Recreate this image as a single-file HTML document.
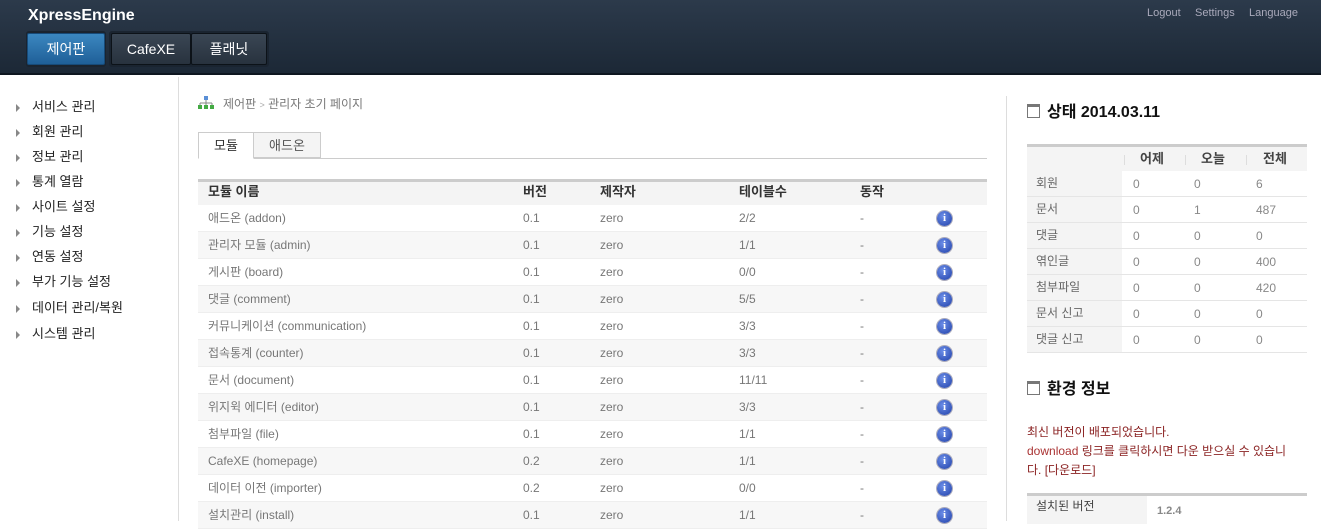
<!DOCTYPE html>
<html><head><meta charset="utf-8"><style>
*{margin:0;padding:0;box-sizing:border-box}
body{width:1321px;height:521px;overflow:hidden;font-family:"Liberation Sans","Noto Sans CJK KR",sans-serif;font-size:12px;line-height:1.15;color:#333;background:#fff;position:relative}
.hd{position:absolute;left:0;top:0;width:1321px;height:75px;background:linear-gradient(#2c3a4b,#1c2836);border-bottom:2px solid #0e1620}
.logo{position:absolute;left:28px;top:7px;color:#fff;font-weight:bold;font-size:16px}
.gnb{position:absolute;top:31px;height:36px;background:#1a2430;border-radius:3px}
.btn{position:absolute;top:2px;height:32px;line-height:30px;color:#fff;font-size:14px;text-align:center;border:1px solid #0c1218;border-radius:2px;background:linear-gradient(#3a4654,#28323e)}
.top{position:absolute;top:7px;color:#aab;font-size:11px}
.lnb{position:absolute;left:0;top:77px;width:179px;height:444px;border-right:1px solid #ddd}
.lnb div{position:absolute;left:32px;font-size:13px;color:#222}
.lnb div:before{content:"";position:absolute;left:-16px;top:4px;border-left:4px solid #888;border-top:4px solid transparent;border-bottom:4px solid transparent}
.abs{position:absolute}
.row{position:absolute;left:198px;width:789px;height:27px;border-bottom:1px solid #eee;color:#777;font-size:12px}
.row span{position:absolute;top:6px;line-height:14px}
.row.o{background:#f7f7f7}
.ic{position:absolute;left:739px;top:6px;width:15px;height:15px;border-radius:50%;background:radial-gradient(circle at 40% 35%,#6c8ee8,#1f3fa8);color:#fff;font:bold 11px "Liberation Serif",serif;text-align:center;line-height:15px;box-shadow:0 0 0 1px #aab}
.rs{position:absolute;left:1006px;top:96px;width:1px;height:425px;background:#ddd}
.t2{position:absolute;left:1027px;width:280px;height:26px;border-bottom:1px solid #e5e5e5;color:#888}
.t2 .l{position:absolute;left:0;top:0;width:95px;height:25px;background:#f4f4f4;padding:5px 0 0 9px;color:#666;line-height:14px}
.t2 span{position:absolute;top:6px;line-height:14px}
.h3{position:absolute;left:1027px;font-size:16px;font-weight:bold;color:#111}
.h3:before{content:"";display:inline-block;width:11px;height:10px;border:1px solid #777;border-top:3px solid #777;margin-right:7px;vertical-align:-1px}
</style></head><body>
<div class="hd">
<div class="logo">XpressEngine</div>
<div class="gnb" style="left:26px;width:80px"><div class="btn" style="left:1px;width:78px;background:linear-gradient(#3b87c0,#1f5f98);border-color:#174a78">제어판</div></div>
<div class="gnb" style="left:109px;width:160px"><div class="btn" style="left:2px;width:80px">CafeXE</div><div class="btn" style="left:82px;width:76px">플래닛</div></div>
<div class="top" style="left:1147px">Logout</div><div class="top" style="left:1195px">Settings</div><div class="top" style="left:1249px">Language</div>
</div>
<div class="lnb">
<div style="top:23px">서비스 관리</div><div style="top:48px">회원 관리</div><div style="top:73px">정보 관리</div><div style="top:98px">통계 열람</div><div style="top:123px">사이트 설정</div><div style="top:148px">기능 설정</div><div style="top:173px">연동 설정</div><div style="top:198px">부가 기능 설정</div><div style="top:224px">데이터 관리/복원</div><div style="top:250px">시스템 관리</div>
</div>
<svg class="abs" style="left:198px;top:96px" width="16" height="13"><rect x="6" y="0" width="4" height="4" fill="#5a8fd6"/><path d="M8 4v3M2 7h12M2 7v2M8 7v2M14 7v2" stroke="#888" fill="none"/><rect x="0" y="9" width="4" height="4" fill="#4a4"/><rect x="6" y="9" width="4" height="4" fill="#4a4"/><rect x="12" y="9" width="4" height="4" fill="#4a4"/></svg>
<div class="abs" style="left:223px;top:98px;color:#777;font-size:12px">제어판 <span style="font-size:9px;color:#aaa">&gt;</span> 관리자 초기 페이지</div>
<div class="abs" style="left:198px;top:158px;width:789px;height:1px;background:#ccc"></div>
<div class="abs" style="left:198px;top:132px;width:56px;height:27px;border:1px solid #ccc;border-bottom:1px solid #fff;background:#fff;text-align:center;line-height:25px;font-size:13px;color:#333">모듈</div>
<div class="abs" style="left:253px;top:132px;width:68px;height:26px;border:1px solid #ccc;background:#f4f4f4;text-align:center;line-height:25px;font-size:13px;color:#555">애드온</div>
<div class="abs" style="left:198px;top:179px;width:789px;height:26px;background:#f4f4f4;border-top:3px solid #ccc;font-weight:bold;color:#333;font-size:13px;line-height:15px">
<span class="abs" style="left:10px;top:2px">모듈 이름</span><span class="abs" style="left:325px;top:2px">버전</span><span class="abs" style="left:402px;top:2px">제작자</span><span class="abs" style="left:541px;top:2px">테이블수</span><span class="abs" style="left:662px;top:2px">동작</span></div>
<div class="row" style="top:205px"><span style="left:10px">애드온 (addon)</span><span style="left:325px">0.1</span><span style="left:402px">zero</span><span style="left:541px">2/2</span><span style="left:662px">-</span><i class="ic">i</i></div>
<div class="row o" style="top:232px"><span style="left:10px">관리자 모듈 (admin)</span><span style="left:325px">0.1</span><span style="left:402px">zero</span><span style="left:541px">1/1</span><span style="left:662px">-</span><i class="ic">i</i></div>
<div class="row" style="top:259px"><span style="left:10px">게시판 (board)</span><span style="left:325px">0.1</span><span style="left:402px">zero</span><span style="left:541px">0/0</span><span style="left:662px">-</span><i class="ic">i</i></div>
<div class="row o" style="top:286px"><span style="left:10px">댓글 (comment)</span><span style="left:325px">0.1</span><span style="left:402px">zero</span><span style="left:541px">5/5</span><span style="left:662px">-</span><i class="ic">i</i></div>
<div class="row" style="top:313px"><span style="left:10px">커뮤니케이션 (communication)</span><span style="left:325px">0.1</span><span style="left:402px">zero</span><span style="left:541px">3/3</span><span style="left:662px">-</span><i class="ic">i</i></div>
<div class="row o" style="top:340px"><span style="left:10px">접속통계 (counter)</span><span style="left:325px">0.1</span><span style="left:402px">zero</span><span style="left:541px">3/3</span><span style="left:662px">-</span><i class="ic">i</i></div>
<div class="row" style="top:367px"><span style="left:10px">문서 (document)</span><span style="left:325px">0.1</span><span style="left:402px">zero</span><span style="left:541px">11/11</span><span style="left:662px">-</span><i class="ic">i</i></div>
<div class="row o" style="top:394px"><span style="left:10px">위지윅 에디터 (editor)</span><span style="left:325px">0.1</span><span style="left:402px">zero</span><span style="left:541px">3/3</span><span style="left:662px">-</span><i class="ic">i</i></div>
<div class="row" style="top:421px"><span style="left:10px">첨부파일 (file)</span><span style="left:325px">0.1</span><span style="left:402px">zero</span><span style="left:541px">1/1</span><span style="left:662px">-</span><i class="ic">i</i></div>
<div class="row o" style="top:448px"><span style="left:10px">CafeXE (homepage)</span><span style="left:325px">0.2</span><span style="left:402px">zero</span><span style="left:541px">1/1</span><span style="left:662px">-</span><i class="ic">i</i></div>
<div class="row" style="top:475px"><span style="left:10px">데이터 이전 (importer)</span><span style="left:325px">0.2</span><span style="left:402px">zero</span><span style="left:541px">0/0</span><span style="left:662px">-</span><i class="ic">i</i></div>
<div class="row o" style="top:502px"><span style="left:10px">설치관리 (install)</span><span style="left:325px">0.1</span><span style="left:402px">zero</span><span style="left:541px">1/1</span><span style="left:662px">-</span><i class="ic">i</i></div>
<div class="rs"></div>
<div class="h3" style="top:104px">상태 2014.03.11</div>
<div class="abs" style="left:1027px;top:144px;width:280px;height:27px;background:#f4f4f4;border-top:3px solid #ccc;font-weight:bold;font-size:13px;color:#444;line-height:15px">
<span class="abs" style="left:113px;top:4px">어제</span><span class="abs" style="left:174px;top:4px">오늘</span><span class="abs" style="left:236px;top:4px">전체</span>
<i class="abs" style="left:97px;top:8px;width:1px;height:10px;background:#ddd"></i><i class="abs" style="left:158px;top:8px;width:1px;height:10px;background:#ddd"></i><i class="abs" style="left:219px;top:8px;width:1px;height:10px;background:#ddd"></i></div>
<div class="t2" style="top:171px"><div class="l">회원</div><span style="left:106px">0</span><span style="left:167px">0</span><span style="left:229px">6</span></div>
<div class="t2" style="top:197px"><div class="l">문서</div><span style="left:106px">0</span><span style="left:167px">1</span><span style="left:229px">487</span></div>
<div class="t2" style="top:223px"><div class="l">댓글</div><span style="left:106px">0</span><span style="left:167px">0</span><span style="left:229px">0</span></div>
<div class="t2" style="top:249px"><div class="l">엮인글</div><span style="left:106px">0</span><span style="left:167px">0</span><span style="left:229px">400</span></div>
<div class="t2" style="top:275px"><div class="l">첨부파일</div><span style="left:106px">0</span><span style="left:167px">0</span><span style="left:229px">420</span></div>
<div class="t2" style="top:301px"><div class="l">문서 신고</div><span style="left:106px">0</span><span style="left:167px">0</span><span style="left:229px">0</span></div>
<div class="t2" style="top:327px"><div class="l">댓글 신고</div><span style="left:106px">0</span><span style="left:167px">0</span><span style="left:229px">0</span></div>
<div class="h3" style="top:381px">환경 정보</div>
<div class="abs" style="left:1027px;top:423px;width:262px;color:#8b2323;font-size:12px;line-height:19px">최신 버전이 배포되었습니다.<br><span style="color:#a33">download</span> 링크를 클릭하시면 다운 받으실 수 있습니다. [다운로드]</div>
<div class="abs" style="left:1027px;top:493px;width:280px;height:28px;border-top:3px solid #ccc"><div class="abs" style="left:0;top:0;width:120px;height:28px;background:#f4f4f4;padding:4px 0 0 9px;color:#444">설치된 버전</div><span class="abs" style="left:130px;top:9px;color:#888;font-weight:bold;font-size:11px">1.2.4</span></div>
</body></html>
